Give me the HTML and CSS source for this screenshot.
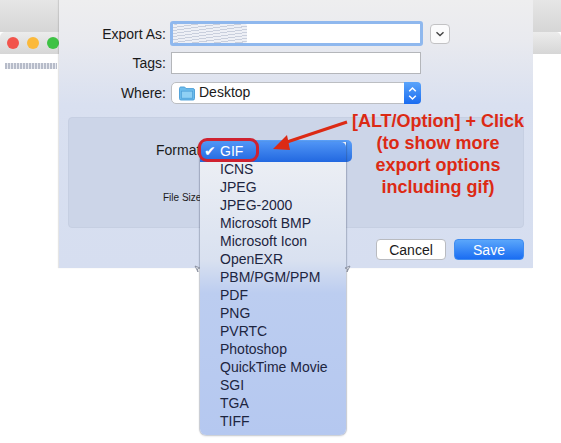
FILE: index.html
```html
<!DOCTYPE html>
<html lang="en">
<head>
<meta charset="utf-8">
<title>Export As</title>
<link rel="stylesheet" href="styles.css">
</head>
<body>
<div class="desktop">
  <div class="back-top"></div>
  <div class="back-title">
    <span class="light red"></span><span class="light yellow"></span><span class="light green"></span>
  </div>
  <div class="back-name"></div>

  <section class="dialog">
    <div class="row row-export">
      <label class="label">Export As:</label>
      <div class="field focused"><span class="scribble"></span></div>
      <button class="expand"><svg width="10" height="6" viewBox="0 0 10 6"><path d="M1.5 1.2 5 4.6 8.5 1.2" fill="none" stroke="#444" stroke-width="1.4"/></svg></button>
    </div>
    <div class="row row-tags">
      <label class="label">Tags:</label>
      <div class="field"></div>
    </div>
    <div class="row row-where">
      <label class="label">Where:</label>
      <div class="popup">
        <svg class="folder" width="16" height="15" viewBox="0 0 17 15"><path d="M.5 2.2C.5 1.2 1.2.6 2 .6h4l1.4 1.7h7.6c.9 0 1.5.6 1.5 1.5v9.2c0 .8-.6 1.4-1.5 1.4H2c-.8 0-1.5-.6-1.5-1.4z" fill="#6cbcec" stroke="#4c9fd8"/><rect x="2.5" y="5" width="12" height="7.5" fill="#8fd0f4" stroke="#4c9fd8" stroke-width=".8"/></svg>
        <span>Desktop</span>
        <span class="stepper"><svg width="9" height="15" viewBox="0 0 9 15"><path d="M1.2 5.2 4.5 2 7.8 5.2M1.2 9.8 4.5 13 7.8 9.8" fill="none" stroke="#fff" stroke-width="1.5"/></svg></span>
      </div>
    </div>
    <div class="panel">
      <div class="panel-format">Format</div>
      <div class="panel-size">File Size</div>
      <div class="panel-select"></div>
    </div>
    <div class="actions">
      <button class="btn">Cancel</button>
      <button class="btn primary">Save</button>
    </div>
  </section>

  <ul class="menu">
    <li class="selected"><span class="check">✔</span>GIF</li>
    <li>ICNS</li>
    <li>JPEG</li>
    <li>JPEG-2000</li>
    <li>Microsoft BMP</li>
    <li>Microsoft Icon</li>
    <li>OpenEXR</li>
    <li>PBM/PGM/PPM</li>
    <li>PDF</li>
    <li>PNG</li>
    <li>PVRTC</li>
    <li>Photoshop</li>
    <li>QuickTime Movie</li>
    <li>SGI</li>
    <li>TGA</li>
    <li>TIFF</li>
  </ul>

  <svg class="cursor cursor-left" width="7" height="8" viewBox="0 0 7 8"><path d="M1 1 6 3 3.5 4 4 7z" fill="#dfe3ea" stroke="#7d8494" stroke-width=".8"/></svg>
  <svg class="cursor cursor-right" width="7" height="8" viewBox="0 0 7 8"><path d="M6 1 1 3 3.5 4 3 7z" fill="#dfe3ea" stroke="#7d8494" stroke-width=".8"/></svg>

  <div class="ring"></div>
  <svg class="arrow" width="90" height="40" viewBox="0 0 90 40"><path d="M75 6 12 27" stroke="#dc2a14" stroke-width="3" fill="none"/><path d="M1 33 15 19 18 34z" fill="#dc2a14"/></svg>
  <p class="note">[ALT/Option] + Click<br>(to show more<br>export options<br>including gif)</p>
</div>
</body>
</html>
```
FILE: styles.css
```css
* { box-sizing: border-box; }
html, body { margin: 0; padding: 0; background: #fff; }
body { font-family: "Liberation Sans", Arial, sans-serif; color: #1a1a1a; }
.desktop { position: relative; width: 561px; height: 443px; overflow: hidden; }

.back-top { position: absolute; left: 0; top: 0; width: 561px; height: 32px; background: linear-gradient(#e6e6e6, #d6d6d6); }
.back-title { position: absolute; left: 0; top: 32px; width: 561px; height: 22px; background: linear-gradient(#ececec, #d6d6d6); border-radius: 5px 5px 0 0; display: flex; align-items: center; gap: 8px; padding-left: 7px; }
.light { width: 12px; height: 12px; border-radius: 50%; }
.red { background: #f2544c; }
.yellow { background: #fbb93a; }
.green { background: #3ec244; }
.back-name { position: absolute; left: 5px; top: 63px; width: 52px; height: 6px; background: repeating-linear-gradient(90deg, #b7bcc9 0 2px, #e8eaf0 2px 3px); filter: blur(.6px); }

.dialog { position: absolute; left: 59px; top: 0; width: 474px; height: 268px; background: linear-gradient(#eeeeef 0, #e9eaef 40px, #d9e0f0 105px, #d6def0 100%); padding-top: 21px; box-shadow: -1px 0 1px rgba(0,0,0,.1); }
.row { display: flex; align-items: center; }
.label { width: 107px; text-align: right; font-size: 14px; margin-right: 5px; }
.row-export { height: 25px; }
.row-export .label { padding-top: 1px; }
.row-tags { height: 22px; margin-top: 6px; }
.row-where { height: 22px; margin-top: 8px; }
.row-where .label { padding-bottom: 1px; }
.field { width: 250px; height: 22px; background: #fff; border: 1px solid #b4b6ba; }
.focused { width: 253px; height: 25px; margin-left: -1px; border: 3px solid #8fb8ee; border-radius: 3px; display: flex; align-items: center; padding-left: 0; }
.scribble { width: 74px; height: 19px; background: repeating-linear-gradient(172deg, #c9cfdd 0 1px, #eef0f6 1px 3px); filter: blur(.6px); border-radius: 2px; }
.expand { width: 20px; height: 20px; margin-left: 7px; padding: 0; display: flex; align-items: center; justify-content: center; background: #fbfbfc; border: 1px solid #c2c2c4; border-radius: 4px; }
.popup { width: 250px; height: 22px; background: #fff; border: 1px solid #bcbec2; border-radius: 5px; display: flex; align-items: center; position: relative; font-size: 14px; padding-left: 7px; gap: 4px; }
.popup span:not(.stepper) { position: relative; top: -1px; }
.stepper { position: absolute; right: -1px; top: -1px; width: 17px; height: 22px; background: linear-gradient(#5aa4fb, #1a6cf0); border-radius: 0 4px 4px 0; display: flex; align-items: center; justify-content: center; }

.panel { position: relative; margin: 13px 0 0 9px; width: 456px; height: 111px; background: #ccd5e8; border: 1px solid #c6cfe2; border-radius: 4px; }
.panel-format { position: absolute; left: 87px; top: 24px; font-size: 14px; }
.panel-size { position: absolute; left: 94px; top: 74px; font-size: 10px; }
.panel-select { position: absolute; left: 131px; top: 22px; width: 152px; height: 22px; background: linear-gradient(#5a9ff8, #2a6fe0); border-radius: 5px; }

.actions { display: flex; justify-content: flex-end; gap: 8px; margin: 11px 9px 0 0; }
.btn { width: 70px; height: 21px; padding: 0; font: 14px "Liberation Sans", Arial, sans-serif; color: #1a1a1a; background: #fff; border: 1px solid #b9bbc0; border-radius: 4px; }
.primary { color: #fff; background: linear-gradient(#5aa6fb, #1a6df2); border-color: #3f8cf0; }

.menu { position: absolute; left: 200px; top: 142px; width: 146px; height: 293px; margin: 0; padding: 0; list-style: none; font-size: 14px; color: #1d2540; border-radius: 0 0 6px 6px; background: linear-gradient(#eff1f5 0, #d9e1f0 118px, #bccdf0 151px, #b5c8f0 100%); box-shadow: 0 1px 2px rgba(40,50,80,.25), -1px 0 1px rgba(40,50,80,.2), 1px 0 1px rgba(40,50,80,.2); }
.menu li { height: 18px; line-height: 18px; padding-left: 20px; position: relative; }
.menu .selected { height: 20px; line-height: 18px; margin: 0 0 -2px; color: #fff; background: linear-gradient(#4f94f5, #2268e0); border-radius: 5px 5px 0 0; }
.check { position: absolute; left: 4px; top: 0; font: 700 14px "DejaVu Sans", sans-serif; line-height: 18px; }

.cursor { position: absolute; top: 265px; }
.cursor-left { left: 194px; }
.cursor-right { left: 344px; }
.ring { position: absolute; left: 198px; top: 138px; width: 61px; height: 24px; border: 3px solid #cf2230; border-radius: 9px; }
.arrow { position: absolute; left: 272px; top: 116px; }
.note { position: absolute; left: 345px; top: 110px; width: 186px; margin: 0; text-align: center; font-size: 18px; line-height: 22px; font-weight: 700; color: #dc2a14; }
```
